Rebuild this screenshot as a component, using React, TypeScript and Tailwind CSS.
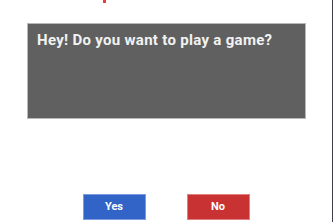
export default function App() {
  return (
    <div
      className="relative h-[222px] w-[333px] overflow-hidden bg-white border-r border-[#3b3e44]"
      style={{ fontFamily: 'Roboto, "Liberation Sans", sans-serif' }}
    >
      <div className="ml-[103px] h-[3px] w-[3px] bg-[#f23a3a]" />
      <div className="ml-[27px] mt-[20px] h-[96px] w-[279px] border border-[#b8b8b8] bg-[#606060] px-[9px] pt-[5px]">
        <p className="text-[15px] font-bold tracking-[0.3px] text-[#f2f2f2]">
          Hey! Do you want to play a game?
        </p>
      </div>
      <div className="mt-[75px] flex justify-center gap-[41px]">
        <button className="h-[26px] w-[63px] border border-[#7d9ce0] bg-[#3264c8] text-[11px] font-bold text-white">
          Yes
        </button>
        <button className="h-[26px] w-[63px] border border-[#e08080] bg-[#c93232] text-[11px] font-bold text-white">
          No
        </button>
      </div>
    </div>
  )
}
